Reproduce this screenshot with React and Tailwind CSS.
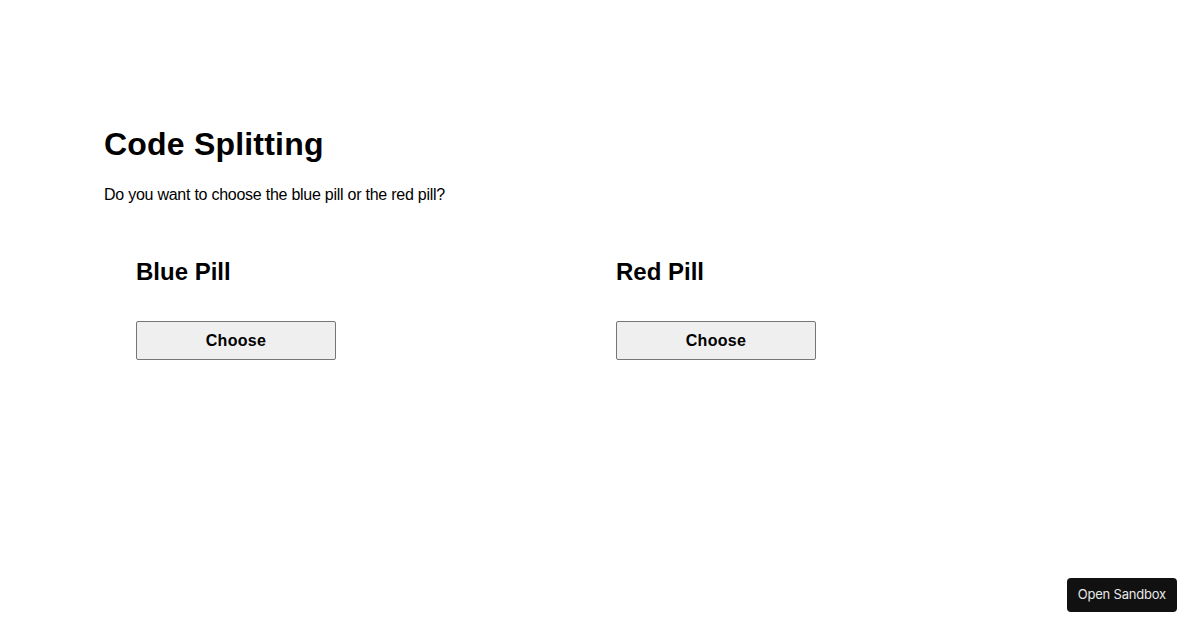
import React from 'react'

const Pill = ({ name }) => (
  <div className="w-[480px] px-8 pt-[33px]">
    <h2 className="text-2xl font-bold leading-[30px]">{name}</h2>
    <button className="mt-[34px] w-[200px] h-[39px] bg-[#efefef] border border-[#767676] rounded-[2px] text-base font-bold tracking-[0.3px]">
      Choose
    </button>
  </div>
)

export default function App() {
  return (
    <div className="relative w-[1200px] h-[630px] bg-white text-black font-['Liberation_Sans',Arial,sans-serif]">
      <div className="pl-[104px] pt-[124px]">
        <h1 className="text-[32px] font-bold leading-[40px] tracking-[0.2px]">Code Splitting</h1>
        <p className="mt-[21px] text-base leading-[20px] tracking-[-0.25px]">
          Do you want to choose the blue pill or the red pill?
        </p>
        <div className="flex mt-[19px]">
          <Pill name="Blue Pill" />
          <Pill name="Red Pill" />
        </div>
      </div>
      <button className="absolute right-[23px] bottom-[18px] h-[34px] px-[11px] rounded bg-[#111111] text-[#e8e8e8] text-[13px] tracking-[-0.2px] font-['Inter',sans-serif]">
        Open Sandbox
      </button>
    </div>
  )
}
